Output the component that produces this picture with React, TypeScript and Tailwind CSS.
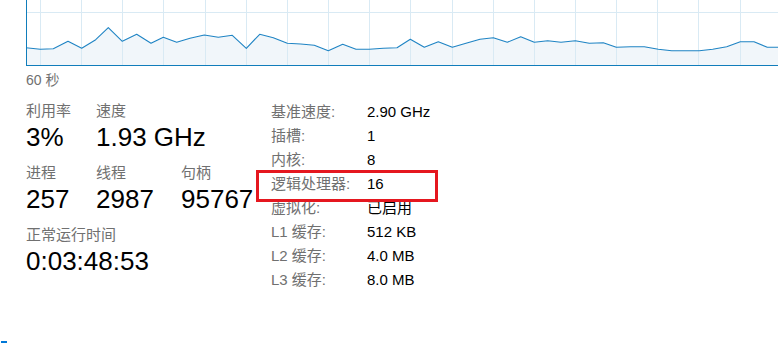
const points: [number, number][] = [
  [26, 47.7], [40.3, 49.3], [53.3, 48.7], [68, 41.3], [81.7, 48.3], [95.7, 39.7],
  [108.3, 27.7], [122.3, 41.3], [136.7, 34.3], [151, 43.3], [163.3, 37.3], [176.7, 42.3],
  [190, 38.3], [204.3, 35], [218.3, 37.3], [232.3, 35.3], [246.3, 48.3], [259.7, 34.3],
  [273.3, 37.7], [287.3, 43.3], [300.7, 44], [314.3, 45.3], [328.3, 50.7], [342.7, 44.3],
  [356, 49.3], [369.3, 49.3], [383.3, 48.3], [397, 47.7], [410.3, 39.3], [424.3, 47.3],
  [438.3, 41.7], [452.3, 47.3], [466, 43.3], [480, 39.3], [493.3, 37.7], [507.3, 42.3],
  [520.7, 36.7], [534.3, 42.3], [547.7, 40.7], [561, 42.3], [575.3, 40.7], [589.3, 43.3],
  [603.3, 42.7], [616.3, 47.3], [630.7, 46.7], [644.3, 46.7], [658.3, 49.3], [671.7, 50.7],
  [685.3, 50.7], [699.3, 50.7], [712.7, 49.3], [726.7, 46.7], [740.3, 41.7], [754, 41.7],
  [767.3, 47.3], [781, 47.3],
]

function CpuChart() {
  const line = points.map(([x, y]) => `${x},${y}`).join(" ")
  const area = `${line} 781,65 26,65`
  const gridX = Array.from({ length: 18 }, (_, i) => Math.round(40 + 41.15 * i) + 0.5)

  return (
    <svg width={752} height={66} viewBox="26 0 752 66" className="block">
      <polygon points={area} fill="#f1f6fa" />
      {gridX.map((x) => (
        <line key={x} x1={x} y1={0} x2={x} y2={65} stroke="#d9eaf4" strokeWidth={1} />
      ))}
      <line x1={26} y1={12.5} x2={778} y2={12.5} stroke="#d9eaf4" strokeWidth={1} />
      <polyline points={line} fill="none" stroke="#1f84c4" strokeWidth={1.1} strokeLinejoin="round" />
      <line x1={26.5} y1={0} x2={26.5} y2={66} stroke="#117dbb" strokeWidth={1} />
      <line x1={26} y1={65.5} x2={778} y2={65.5} stroke="#117dbb" strokeWidth={1} />
    </svg>
  )
}

function Stat({ label, value, className = "" }: { label: string; value: string; className?: string }) {
  return (
    <div className={`flex flex-col ${className}`}>
      <span className="text-[15px] leading-[20px] text-[#707070] whitespace-nowrap">{label}</span>
      <span className="text-[26px] leading-[32px] text-black whitespace-nowrap">{value}</span>
    </div>
  )
}

const specs: [string, string][] = [
  ["基准速度:", "2.90 GHz"],
  ["插槽:", "1"],
  ["内核:", "8"],
  ["逻辑处理器:", "16"],
  ["虚拟化:", "已启用"],
  ["L1 缓存:", "512 KB"],
  ["L2 缓存:", "4.0 MB"],
  ["L3 缓存:", "8.0 MB"],
]

export default function App() {
  return (
    <div className="relative w-[778px] h-[343px] overflow-hidden bg-white font-['Liberation_Sans','Noto_Sans_CJK_SC',sans-serif]">
      <div className="pl-[26px]">
        <CpuChart />
      </div>
      <div className="pl-[26px] mt-[5px] text-[14px] leading-[18px] text-[#707070]">60 秒</div>

      <div className="flex pl-[26px] mt-[11px]">
        <div className="w-[245px] pt-[1px] flex flex-col gap-[10px]">
          <div className="flex">
            <Stat label="利用率" value="3%" className="w-[70px]" />
            <Stat label="速度" value="1.93 GHz" />
          </div>
          <div className="flex">
            <Stat label="进程" value="257" className="w-[70px]" />
            <Stat label="线程" value="2987" className="w-[85px]" />
            <Stat label="句柄" value="95767" />
          </div>
          <Stat label="正常运行时间" value="0:03:48:53" />
        </div>

        <div className="grid grid-cols-[96px_auto] text-[15px] leading-[24px]">
          {specs.map(([k, v]) => (
            <div key={k} className="contents">
              <span className="text-[#707070] whitespace-nowrap">{k}</span>
              <span className="text-black whitespace-nowrap">{v}</span>
            </div>
          ))}
        </div>
      </div>

      <div className="absolute left-[256px] top-[170px] w-[182px] h-[32px] border-[3px] border-[#e5171f]" />
      <div className="absolute left-[1px] top-[341px] w-[6px] h-[2px] bg-[#0078d7]" />
    </div>
  )
}
